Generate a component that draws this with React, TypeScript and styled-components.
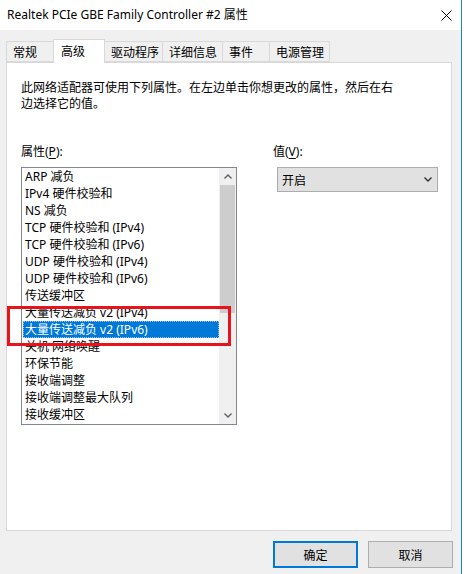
import React from "react";
import styled, { createGlobalStyle } from "styled-components";

const Global = createGlobalStyle`
  html, body { margin: 0; padding: 0; background: #ffffff; }
  body {
    font-family: "Noto Sans", "Noto Sans CJK SC", sans-serif;
    font-size: 12px;
    color: #000000;
  }
  * { box-sizing: border-box; }
`;

const Page = styled.div`
  width: 465px;
  height: 574px;
  display: flex;
  background: #ffffff;
  overflow: hidden;
`;

const Window = styled.div`
  position: relative;
  width: 462px;
  height: 574px;
  flex: none;
  border-right: 1px solid #1883d7;
  display: flex;
  flex-direction: column;
  background: #f0f0f0;
`;

const TitleBar = styled.div`
  height: 30px;
  flex: none;
  background: #ffffff;
  display: flex;
  align-items: center;
  justify-content: space-between;
  padding: 0 9px 0 7px;
`;

const Title = styled.span`
  font-size: 12px;
  line-height: 16px;
`;

const Body = styled.div`
  display: flex;
  flex-direction: column;
  padding: 9px 9px 0 6px;
`;

const TabStrip = styled.div`
  height: 23px;
  display: flex;
  align-items: flex-end;
`;

const Tab = styled.div<{ $w: number; $active?: boolean }>`
  width: ${(p) => p.$w}px;
  height: ${(p) => (p.$active ? 24 : 21)}px;
  margin-right: -1px;
  margin-bottom: ${(p) => (p.$active ? -1 : 0)}px;
  position: relative;
  z-index: ${(p) => (p.$active ? 2 : 1)};
  display: flex;
  align-items: center;
  padding-left: ${(p) => (p.$active ? 7 : 6)}px;
  padding-bottom: ${(p) => (p.$active ? 2 : 0)}px;
  background: ${(p) => (p.$active ? "#ffffff" : "#f0f0f0")};
  border: 1px solid #d9d9d9;
  border-bottom: ${(p) => (p.$active ? "none" : "1px solid #d9d9d9")};
  white-space: nowrap;
  font-size: 12px;
`;

const Panel = styled.div`
  width: 446px;
  height: 469px;
  background: #ffffff;
  border: 1px solid #d9d9d9;
  padding: 17px 14px 0 14px;
  display: flex;
  flex-direction: column;
`;

const Description = styled.p`
  margin: 0;
  font-size: 12px;
  line-height: 16px;
`;

const Columns = styled.div`
  margin-top: 32px;
  display: grid;
  grid-template-columns: 216px 1fr;
  column-gap: 36px;
`;

const Column = styled.div`
  display: flex;
  flex-direction: column;
`;

const Label = styled.div`
  font-size: 12px;
  line-height: 16px;
  height: 16px;
  margin-bottom: 7px;
  u { text-decoration: underline; text-underline-offset: 2px; }
`;

const ListBox = styled.div`
  width: 216px;
  height: 258px;
  border: 1px solid #828790;
  background: #ffffff;
  display: flex;
`;

const Items = styled.div`
  flex: 1;
  padding-left: 1px;
  display: flex;
  flex-direction: column;
  overflow: hidden;
`;

const Row = styled.div<{ $selected?: boolean }>`
  height: 17px;
  flex: none;
  line-height: 15px;
  padding-left: 1px;
  white-space: nowrap;
  border: 1px ${(p) => (p.$selected ? "dotted #9cc4ec" : "solid transparent")};
  background: ${(p) => (p.$selected ? "#0078d7" : "transparent")};
  color: ${(p) => (p.$selected ? "#ffffff" : "#000000")};
`;

const ScrollBar = styled.div`
  width: 17px;
  flex: none;
  display: flex;
  flex-direction: column;
  background: #f0f0f0;
`;

const ScrollButton = styled.div`
  height: 17px;
  flex: none;
  display: flex;
  align-items: center;
  justify-content: center;
`;

const Thumb = styled.div`
  height: 128px;
  margin: 0 1px;
  background: #cdcdcd;
`;

const Track = styled.div`
  flex: 1;
`;

const Select = styled.div`
  margin-left: 4px;
  width: 161px;
  height: 25px;
  border: 1px solid #adadad;
  background: #e1e1e1;
  display: flex;
  align-items: center;
  justify-content: space-between;
  padding: 0 5px 0 4px;
`;

const Footer = styled.div`
  display: flex;
  justify-content: flex-end;
  gap: 10px;
  margin-top: 10px;
  margin-right: -1px;
`;

const Button = styled.div<{ $default?: boolean }>`
  width: 85px;
  height: 27px;
  display: flex;
  align-items: center;
  justify-content: center;
  background: #e1e1e1;
  border: ${(p) => (p.$default ? "2px solid #0078d7" : "1px solid #adadad")};
  font-size: 12px;
`;

const Highlight = styled.div`
  position: absolute;
  left: 7px;
  top: 306px;
  width: 224px;
  height: 40px;
  border: 3px solid #e8141b;
  pointer-events: none;
  z-index: 5;
`;

const Chevron = ({ up, color = "#606060" }: { up?: boolean; color?: string }) => (
  <svg width="8" height="5" viewBox="0 0 8 5">
    <path
      d={up ? "M0.5 4.5 L4 1 L7.5 4.5" : "M0.5 0.5 L4 4 L7.5 0.5"}
      fill="none"
      stroke={color}
      strokeWidth="1.4"
    />
  </svg>
);

const CloseIcon = () => (
  <svg width="11" height="11" viewBox="0 0 11 11">
    <path d="M0.5 0.5 L10.5 10.5 M10.5 0.5 L0.5 10.5" stroke="#000" strokeWidth="1" fill="none" />
  </svg>
);

const tabs: { label: string; w: number; active?: boolean }[] = [
  { label: "常规", w: 48 },
  { label: "高级", w: 52, active: true },
  { label: "驱动程序", w: 59 },
  { label: "详细信息", w: 61 },
  { label: "事件", w: 48 },
  { label: "电源管理", w: 61 },
];

const items = [
  "ARP 减负",
  "IPv4 硬件校验和",
  "NS 减负",
  "TCP 硬件校验和 (IPv4)",
  "TCP 硬件校验和 (IPv6)",
  "UDP 硬件校验和 (IPv4)",
  "UDP 硬件校验和 (IPv6)",
  "传送缓冲区",
  "大量传送减负 v2 (IPv4)",
  "大量传送减负 v2 (IPv6)",
  "关机 网络唤醒",
  "环保节能",
  "接收端调整",
  "接收端调整最大队列",
  "接收缓冲区",
];

export default function App() {
  return (
    <>
      <Global />
      <Page>
        <Window>
          <TitleBar>
            <Title>Realtek PCIe GBE Family Controller #2 属性</Title>
            <CloseIcon />
          </TitleBar>
          <Body>
            <TabStrip>
              {tabs.map((t) => (
                <Tab key={t.label} $w={t.w} $active={t.active}>
                  {t.label}
                </Tab>
              ))}
            </TabStrip>
            <Panel>
              <Description>
                此网络适配器可使用下列属性。在左边单击你想更改的属性，然后在右
                <br />
                边选择它的值。
              </Description>
              <Columns>
                <Column>
                  <Label>
                    属性(<u>P</u>):
                  </Label>
                  <ListBox>
                    <Items>
                      {items.map((it, i) => (
                        <Row key={it} $selected={i === 9}>
                          {it}
                        </Row>
                      ))}
                    </Items>
                    <ScrollBar>
                      <ScrollButton>
                        <Chevron up />
                      </ScrollButton>
                      <Thumb />
                      <Track />
                      <ScrollButton>
                        <Chevron />
                      </ScrollButton>
                    </ScrollBar>
                  </ListBox>
                </Column>
                <Column>
                  <Label>
                    值(<u>V</u>):
                  </Label>
                  <Select>
                    <span>开启</span>
                    <Chevron color="#333333" />
                  </Select>
                </Column>
              </Columns>
            </Panel>
            <Footer>
              <Button $default>确定</Button>
              <Button>取消</Button>
            </Footer>
          </Body>
          <Highlight />
        </Window>
      </Page>
    </>
  );
}
